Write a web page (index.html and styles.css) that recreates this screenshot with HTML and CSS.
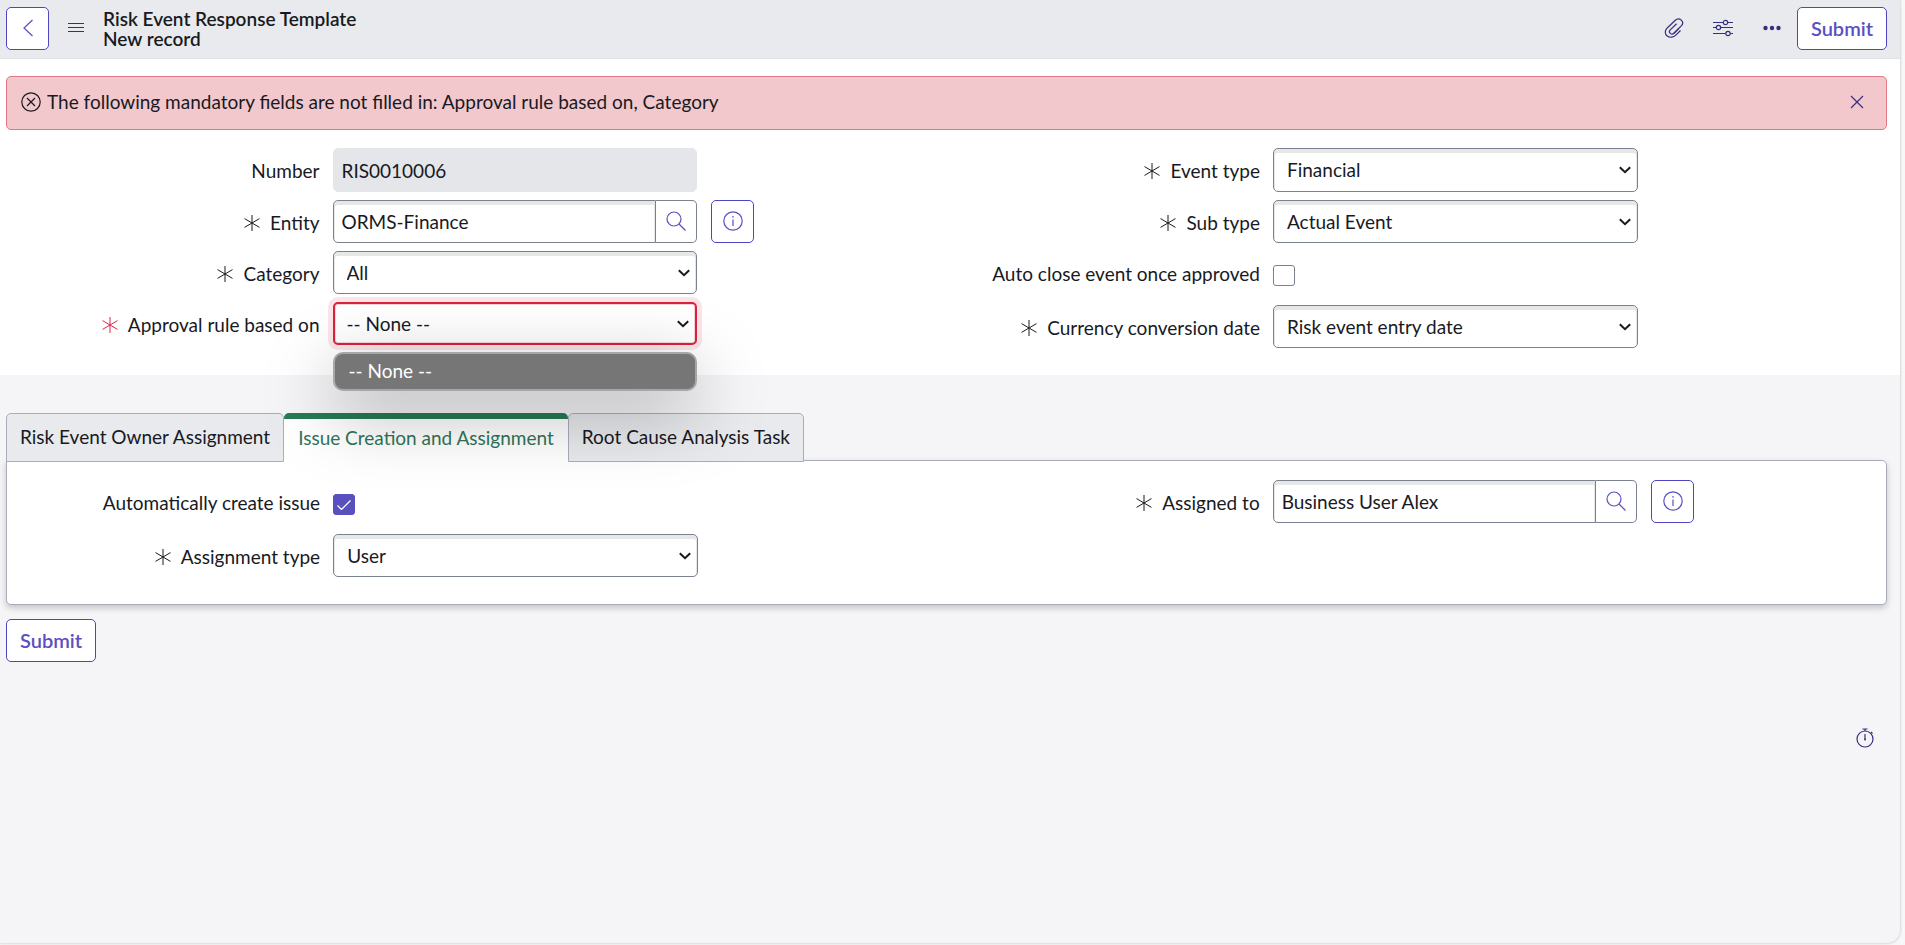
FILE: index.html
```
<!DOCTYPE html>
<html lang="en">
<head>
<meta charset="utf-8">
<title>Risk Event Response Template | New record</title>
<link rel="stylesheet" href="styles.css">
</head>
<body>
<svg class="sprite" aria-hidden="true">
  <symbol id="i-star" viewBox="0 0 16 16"><path d="M8 0v16M0.5 3.6l15 8.8M15.500 3.6l-15 8.8"/></symbol>
  <symbol id="i-search" viewBox="0 0 20 20"><circle cx="8" cy="8" r="7"/><path d="M13 13l6.500 6.500"/></symbol>
  <symbol id="i-info" viewBox="0 0 20 20"><circle cx="10" cy="10" r="9.200"/><path d="M10 8.500v6.500M10 5v1.800"/></symbol>
</svg>
<div class="frame">
  <header class="header">
    <button class="btn btn-square" type="button" aria-label="Back"><svg class="icon" width="10" height="18" viewBox="0 0 10 18"><path d="M9.500 1L1 9l8.500 8"/></svg></button>
    <button class="icon-btn menu-btn" type="button" aria-label="Menu"><svg class="icon" width="16" height="10" viewBox="0 0 16 10"><path d="M0 .5h16M0 4.500h16M0 8.500h16"/></svg></button>
    <h1 class="title"><span>Risk Event Response Template</span><span>New record</span></h1>
    <div class="actions">
      <button class="icon-btn" type="button" aria-label="Attachments"><svg class="icon" width="20" height="20" viewBox="0 0 20 20"><path d="M16.500 12.500L11.800 17.200C9.500 19.500 5.800 20 3.200 18C.6 16 .8 12.500 3 10.200L11.300 2.200C13 .6 15.600.6 17.300 2.100C19 3.700 19 6 17.500 7.700L9.800 15.300C8.800 16.300 7.200 16.300 6.200 15.400C5.200 14.400 5.200 12.900 6.200 11.900L12.600 5.700"/><path d="M15 10.400l-5.500 5.500"/></svg></button>
      <button class="icon-btn" type="button" aria-label="Personalize form"><svg class="icon" width="20" height="16" viewBox="0 0 20 16"><path d="M0 2.500h10M15 2.500h5M0 7.500h3M8 7.500h12M0 13.500h12.500M17.500 13.500h2.500"/><circle cx="12.500" cy="2.500" r="2.200"/><circle cx="5.500" cy="7.500" r="2.200"/><circle cx="15" cy="13.500" r="2.200"/></svg></button>
      <button class="icon-btn" type="button" aria-label="More options"><svg class="icon icon-solid" width="18" height="6" viewBox="0 0 18 6"><circle cx="2.500" cy="3" r="2.200"/><circle cx="9" cy="3" r="2.200"/><circle cx="15.500" cy="3" r="2.200"/></svg></button>
      <button class="btn" type="submit" form="record">Submit</button>
    </div>
  </header>

  <form class="record" id="record">
    <section class="top">
      <div class="alert" role="alert">
        <svg class="icon" width="20" height="20" viewBox="0 0 20 20"><circle cx="10" cy="10" r="9.200"/><path d="M6 6l8 8M14 6l-8 8"/></svg>
        <span>The following mandatory fields are not filled in: Approval rule based on, Category</span>
        <button class="icon-btn alert-close" type="button" aria-label="Close"><svg class="icon" width="12" height="12" viewBox="0 0 12 12"><path d="M0 0l12 12M12 0L0 12"/></svg></button>
      </div>
      <div class="columns">
        <div class="column">
          <div class="row">
            <label class="label" for="number">Number</label>
            <div class="field"><input class="control control-readonly" id="number" value="RIS0010006" readonly></div>
          </div>
          <div class="row">
            <label class="label" for="entity"><svg class="star"><use href="#i-star"/></svg>Entity</label>
            <div class="field lookup"><input class="control" id="entity" value="ORMS-Finance"><button class="lookup-btn" type="button" aria-label="Look up entity"><svg class="icon" width="20" height="20"><use href="#i-search"/></svg></button></div>
            <button class="btn btn-square" type="button" aria-label="Preview entity"><svg class="icon" width="20" height="20"><use href="#i-info"/></svg></button>
          </div>
          <div class="row">
            <label class="label" for="category"><svg class="star"><use href="#i-star"/></svg>Category</label>
            <div class="field"><select class="control" id="category"><option>All</option></select></div>
          </div>
          <div class="row">
            <label class="label" for="rule"><svg class="star star-empty"><use href="#i-star"/></svg>Approval rule based on</label>
            <div class="field">
              <select class="control control-invalid" id="rule"><option>-- None --</option></select>
              <ul class="popup" role="listbox"><li class="popup-option" role="option" aria-selected="true">-- None --</li></ul>
            </div>
          </div>
        </div>
        <div class="column">
          <div class="row">
            <label class="label" for="event-type"><svg class="star"><use href="#i-star"/></svg>Event type</label>
            <div class="field"><select class="control" id="event-type"><option>Financial</option></select></div>
          </div>
          <div class="row">
            <label class="label" for="sub-type"><svg class="star"><use href="#i-star"/></svg>Sub type</label>
            <div class="field"><select class="control" id="sub-type"><option>Actual Event</option></select></div>
          </div>
          <div class="row row-check">
            <label class="label" for="auto-close">Auto close event once approved</label>
            <div class="field"><input class="check" id="auto-close" type="checkbox"></div>
          </div>
          <div class="row">
            <label class="label" for="currency"><svg class="star"><use href="#i-star"/></svg>Currency conversion date</label>
            <div class="field"><select class="control" id="currency"><option>Risk event entry date</option></select></div>
          </div>
        </div>
      </div>
    </section>

    <section class="related">
      <div class="tabs" role="tablist">
        <button class="tab" type="button" role="tab">Risk Event Owner Assignment</button>
        <button class="tab tab-active" type="button" role="tab" aria-selected="true">Issue Creation and Assignment</button>
        <button class="tab" type="button" role="tab">Root Cause Analysis Task</button>
      </div>
      <div class="panel columns" role="tabpanel">
        <div class="column">
          <div class="row row-check">
            <label class="label" for="auto-issue">Automatically create issue</label>
            <div class="field"><input class="check" id="auto-issue" type="checkbox" checked></div>
          </div>
          <div class="row">
            <label class="label" for="assign-type"><svg class="star"><use href="#i-star"/></svg>Assignment type</label>
            <div class="field"><select class="control" id="assign-type"><option>User</option></select></div>
          </div>
        </div>
        <div class="column">
          <div class="row">
            <label class="label" for="assigned"><svg class="star"><use href="#i-star"/></svg>Assigned to</label>
            <div class="field lookup"><input class="control" id="assigned" value="Business User Alex"><button class="lookup-btn" type="button" aria-label="Look up user"><svg class="icon" width="20" height="20"><use href="#i-search"/></svg></button></div>
            <button class="btn btn-square" type="button" aria-label="Preview user"><svg class="icon" width="20" height="20"><use href="#i-info"/></svg></button>
          </div>
        </div>
      </div>
    </section>
    <button class="btn btn-bottom" type="submit">Submit</button>
  </form>

  <footer class="footer">
    <button class="icon-btn" type="button" aria-label="Response time"><svg class="icon" width="18" height="20" viewBox="0 0 18 20"><circle cx="9" cy="11" r="8"/><path d="M6.500 1h5M9 1v2M15 4l1.500 1.500M9 6v5"/><circle class="dot" cx="9" cy="11.500" r="1"/></svg></button>
  </footer>
</div>
</body>
</html>
```
FILE: styles.css
```
* { box-sizing: border-box; }

body {
  margin: 0;
  min-height: 100vh;
  padding: 0 5px 2px 0;
  display: flex;
  background: #f7f7f7;
  color: #181a1f;
  font: 400 19px/24px Lato, "Liberation Sans", sans-serif;
}

button, input, select { font: inherit; color: inherit; margin: 0; }
button { cursor: pointer; }

.sprite { display: none; }

.frame {
  flex: 1;
  display: flex;
  flex-direction: column;
  min-width: 0;
  background: #f5f5f8;
  border-radius: 0 0 13px 0;
  box-shadow: 0 0 3px rgba(0, 0, 0, 0.25);
}

.header {
  display: flex;
  align-items: center;
  padding: 7px 13px 8px 6px;
  background: #e8eaed;
  border-bottom: 1px solid #dfe1e5;
}

.title {
  display: flex;
  flex-direction: column;
  margin: 0 0 0 19px;
  font-size: 19px;
  line-height: 20px;
  font-weight: 600;
}

.actions { display: flex; align-items: center; margin-left: auto; }

.icon { fill: none; stroke: currentColor; stroke-width: 1.2; flex: none; overflow: visible; }
.icon-solid, .dot { fill: currentColor; stroke: none; }

.btn {
  display: inline-flex;
  align-items: center;
  justify-content: center;
  height: 43px;
  padding: 0 13px 2px;
  border: 1px solid #4f46bf;
  border-radius: 5px;
  background: #fff;
  color: #5a4fc4;
  font-size: 20px;
  font-weight: 600;
}

.btn-square { width: 43px; padding: 0 0 2px; }

.icon-btn {
  display: inline-flex;
  align-items: center;
  justify-content: center;
  width: 49px;
  height: 32px;
  padding: 0 0 2px;
  border: 0;
  background: none;
  color: #352f80;
}

.menu-btn { width: 35px; margin-left: 9px; margin-right: -9px; }

.record { display: flex; flex-direction: column; align-items: stretch; }

.top { padding: 17px 13px 27px 6px; background: #fff; }

.alert {
  display: flex;
  align-items: center;
  gap: 6px;
  height: 54px;
  margin-bottom: 18px;
  padding: 0 0 2px 14px;
  border: 1px solid #e27883;
  border-radius: 5px;
  background: #f2c8cd;
}

.alert-close { width: 58px; margin-left: auto; padding: 0; }

.columns { display: grid; grid-template-columns: 1fr 1fr; }
.column { display: flex; flex-direction: column; gap: 8px; }

.row {
  display: grid;
  grid-template-columns: 4fr 5fr 3fr;
  min-height: 43px;
}

.top .row:first-child { min-height: 44px; }
.row-check { min-height: 46px; }

.label {
  display: flex;
  align-items: center;
  justify-content: flex-end;
  height: 46px;
  margin-bottom: -3px;
  text-align: right;
}

.star { width: 16px; height: 16px; margin-right: 10px; fill: none; stroke: currentColor; stroke-width: 1; }
.star-empty { color: #e0244c; }

.field { position: relative; min-width: 0; padding: 0 14px 0 13px; }
.lookup { display: flex; }

.control {
  display: block;
  width: 100%;
  height: 100%;
  padding: 0 8px;
  border: 1px solid #7c8191;
  border-radius: 5px;
  background: #fff;
  box-shadow: inset 0 3px 0 1px #e6e7e7;
}

select.control {
  appearance: none;
  padding: 0 24px 0 13px;
  background: #fff url("data:image/svg+xml,%3Csvg xmlns='http://www.w3.org/2000/svg' width='12' height='8' fill='none' stroke='%23181a1f' stroke-width='2'%3E%3Cpath d='M.8 1.200L6 6.200l5.200-5'/%3E%3C/svg%3E") right 6px center no-repeat;
}

.lookup .control { flex: 1; min-width: 0; border-radius: 5px 0 0 5px; }

.control-readonly { border-color: #e4e6e9; background: #e4e6e9; box-shadow: none; }

select.control-invalid {
  padding-left: 12px;
  background-position-x: right 5px;
  border: 2px solid #d8243c;
  box-shadow: inset 0 0 0 1px #f6d5d9, 0 0 0 5px #fbe5e8;
}

.lookup-btn {
  display: flex;
  align-items: center;
  justify-content: center;
  width: 41px;
  padding: 0 0 2px;
  border: 1px solid #7c8191;
  border-left: 0;
  border-radius: 0 5px 5px 0;
  background: #fff;
  color: #5a4fc4;
}

.check {
  appearance: none;
  display: block;
  width: 22px;
  height: 21px;
  margin-top: 14px;
  border: 1px solid #7c8191;
  border-radius: 3px;
  background: #fff;
}

.check:checked {
  border-color: #5850bd;
  background: #5850bd url("data:image/svg+xml,%3Csvg xmlns='http://www.w3.org/2000/svg' width='14' height='10' fill='none' stroke='white' stroke-width='1.3'%3E%3Cpath d='M.5 5.500l4 4L13.500.5'/%3E%3C/svg%3E") center no-repeat;
}

.popup {
  position: absolute;
  z-index: 10;
  top: 50px;
  left: 13px;
  right: 14px;
  margin: 0;
  padding: 0;
  list-style: none;
  border: 2px solid #a6a6a6;
  border-radius: 10px;
  background: #767676;
  color: #fff;
  box-shadow: 0 20px 70px rgba(0, 0, 0, 0.35);
}

.popup-option { padding: 5px 14px 6px; }

.related { padding: 38px 13px 0 6px; }

.tabs { position: relative; display: flex; margin-bottom: -2px; }

.tab {
  height: 49px;
  padding: 0 13px 1px;
  border: 1px solid #a9adbb;
  border-radius: 5px 5px 0 0;
  background: #e8eaed;
}

.tab-active {
  padding: 0 14px 6px;
  border: 0;
  border-top: 6px solid #267b55;
  background: #fff;
  color: #2f7558;
}

.panel {
  padding: 19px 0 27px;
  border: 1px solid #a9adbb;
  border-radius: 0 5px 5px 5px;
  background: #fff;
  box-shadow: 0 3px 6px rgba(0, 0, 0, 0.2);
}

.panel .label { height: 45px; }

.btn-bottom { align-self: flex-start; margin: 14px 0 0 6px; }

.footer { display: flex; justify-content: flex-end; padding: 61px 11px 0; }
```
